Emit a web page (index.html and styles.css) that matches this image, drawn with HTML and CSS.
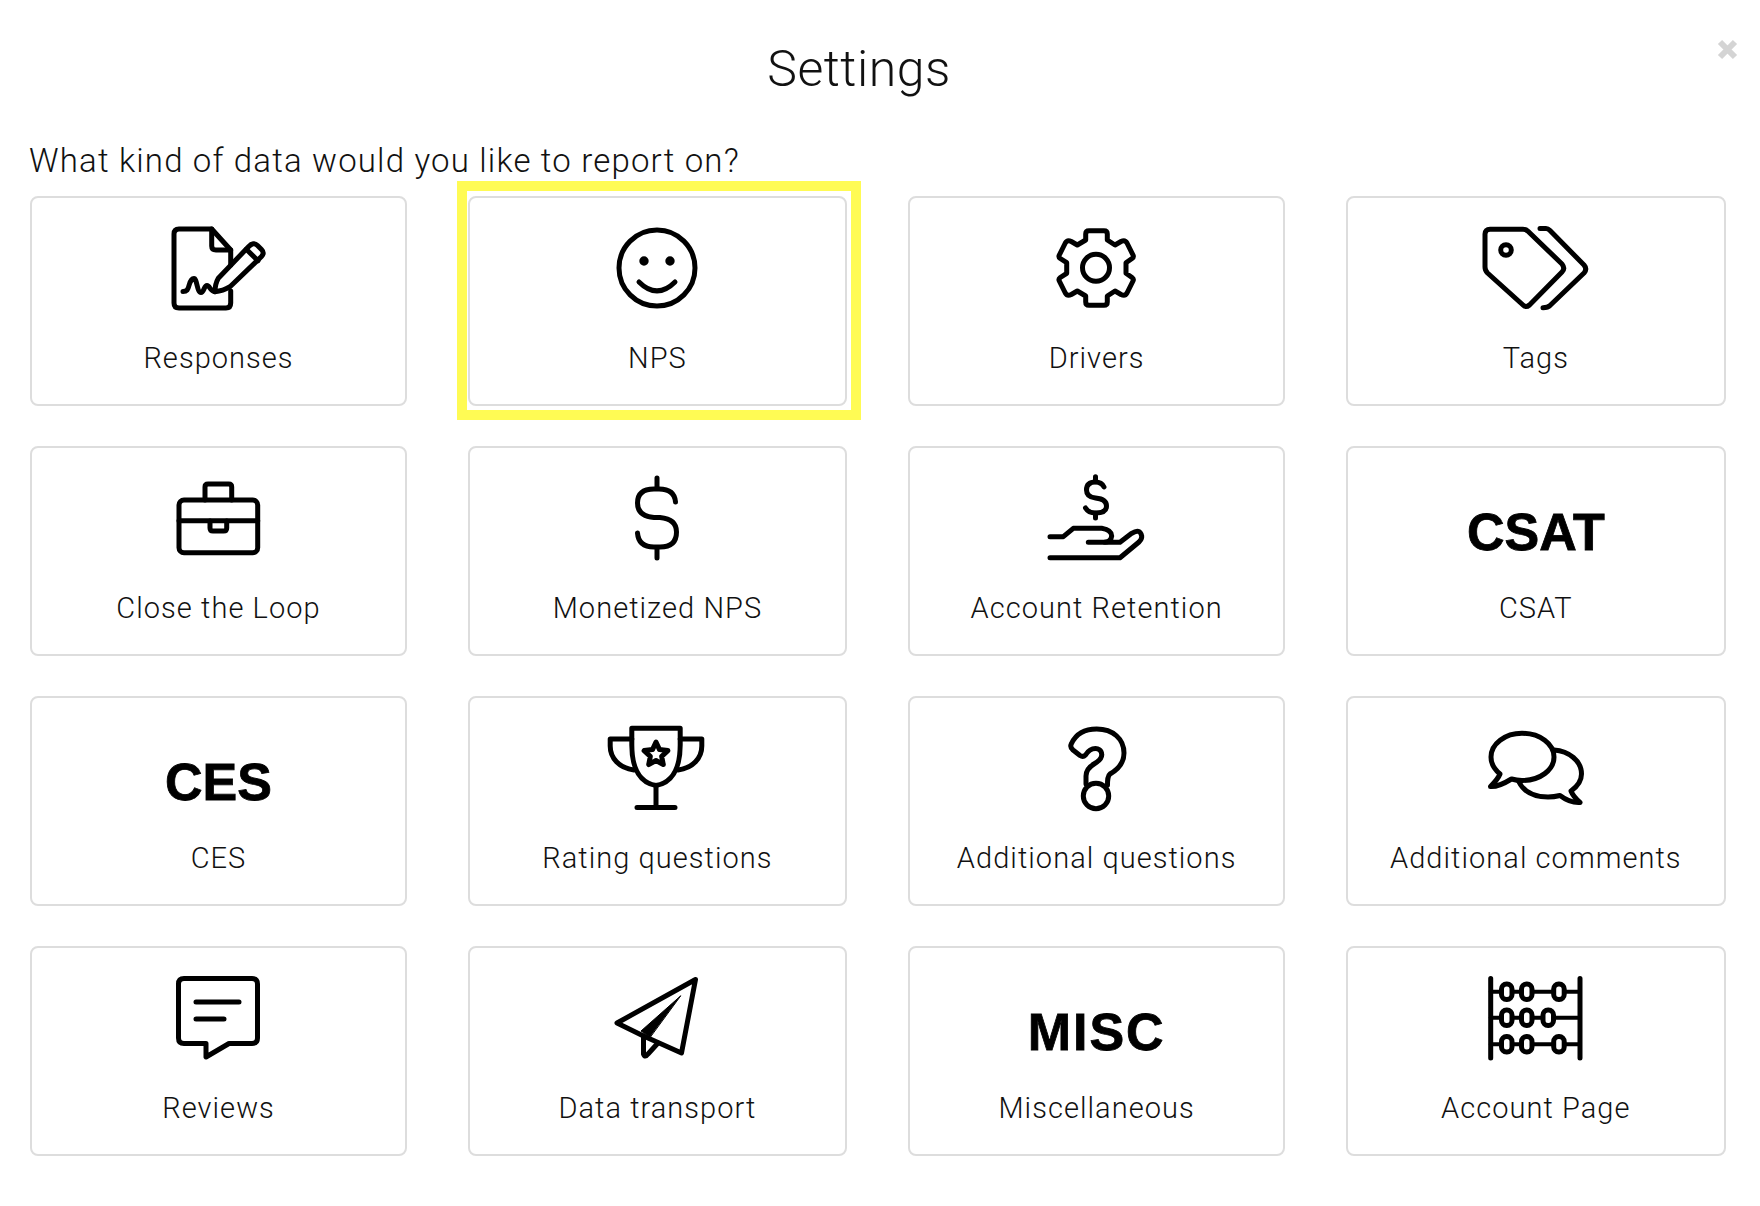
FILE: index.html
```html
<!DOCTYPE html>
<html lang="en">
<head>
    <meta charset="UTF-8">
    <meta name="viewport" content="width=device-width, initial-scale=1.0">
    <title>Settings</title>
    <link rel="stylesheet" href="styles.css">
</head>
<body>

    <div id="settings">
        <svg class="close" viewBox="0 0 21 21"><path d="M3 3 18 18M18 3 3 18"/></svg>
        <h1 class="title">Settings</h1>
        <p class="prompt">What kind of data would you like to report on?</p>

        <div class="grid">
            <div class="card">
                <svg class="icon" viewBox="0 0 96 96">
                    <path d="M59.7 45V30L40.7 9H8Q3 9 3 14V83Q3 88 8 88H55Q59.7 88 59.7 83V71"/>
                    <path d="M40.7 9V26Q40.7 30 45 30H59.7"/>
                    <path d="M44 71.7Q44 64 47.3 58.3L77.5 26.7Q82.5 21.5 86.5 25.5L90.5 29.5Q94 33 90.5 36.5L59 66.7Q52 71 44 71.7Z"/>
                    <path d="M75.3 29.3 87 40.7"/>
                    <path d="M12 71.5C16 71.5 17 69.5 18 65.5 19 61.5 21 58.5 23 58.5 26 58.5 26 72.5 30 72.5 33 72.5 33 65.5 36 65.5 39 65.5 39 71.5 44 71.7"/>
                </svg>
                <div class="label">Responses</div>
            </div>
            <div class="card">
                <svg class="icon" viewBox="0 0 96 96">
                    <circle cx="48" cy="48" r="38"/>
                    <circle class="solid" cx="35" cy="41" r="2.2"/>
                    <circle class="solid" cx="61" cy="41" r="2.2"/>
                    <path d="M30 62Q48 80 66 62"/>
                </svg>
                <div class="label">NPS</div>
                <div class="highlight"></div>
            </div>
            <div class="card">
                <svg class="icon" viewBox="0 0 96 96">
                    <path d="M36.7 20V14Q36.7 10.7 40 10.7H55Q58.3 10.7 58.3 14V20L66 25 72 21.5Q76 19.5 78 23L84 35Q85 37 83 38.5L77 42.7V53.3L83 57.5Q85 59 84 61L78 73Q76 76.5 72 74.5L66 71 58.3 76V82Q58.3 85.3 55 85.3H40Q36.7 85.3 36.7 82V76L28.3 71 22.3 74.5Q18.3 76.5 16.3 73L10.3 61Q9.3 59 11.3 57.5L17.7 53.3V42.7L11.3 38.5Q9.3 37 10.3 35L16.3 23Q18.3 19.5 22.3 21.5L28.3 25Z"/>
                    <circle cx="47" cy="47.7" r="13.5"/>
                </svg>
                <div class="label">Drivers</div>
            </div>
            <div class="card">
                <svg class="icon" viewBox="0 0 96 96">
                    <path d="M2 9.3H35Q38 9.3 40 11.3L74 44Q77.5 48.5 74 52L41.5 85Q38 88 35 85L-.5 53Q-3 50.5-3 47V14Q-3 9.3 2 9.3Z"/>
                    <circle cx="18" cy="30" r="5.3"/>
                    <path d="M52 8.5H58Q60 8.5 62 10.5L96 45Q99.5 49 96 53L62 85.5Q60 87.7 55 87.7"/>
                </svg>
                <div class="label">Tags</div>
            </div>

            <div class="card">
                <svg class="icon" viewBox="0 0 96 96">
                    <rect x="8" y="30" width="78.7" height="52.7" rx="5"/>
                    <path d="M8 50.7H86.7"/>
                    <path d="M34 30V17Q34 14 37 14H57.7Q60.7 14 60.7 17V30"/>
                    <path d="M39 51V58Q39 61 42 61H52.7Q55.7 61 55.7 58V51"/>
                </svg>
                <div class="label">Close the Loop</div>
            </div>
            <div class="card">
                <svg class="icon" viewBox="0 0 96 96">
                    <path d="M48 8V18M48 78V88"/>
                    <path d="M66.5 32Q65.5 19 50 19H45Q28.5 19 28.5 33 28.5 46 45 47.5H51Q67.5 49 67.5 62 67.5 77 51 77H45Q29.5 77 28.5 63"/>
                </svg>
                <div class="label">Monetized NPS</div>
            </div>
            <div class="card">
                <svg class="icon" viewBox="0 0 96 96">
                    <path d="M46.5 6.7V11.7M46.5 43.3V48"/>
                    <path d="M55 17Q52.5 12 46.5 12 37.5 12 37.5 20 37.5 27 46.5 28 57.5 29 57.5 36 57.5 43 46.5 43 39.5 43 36.5 38"/>
                    <path d="M1 66.7H14.3L24.3 58.3H52.7Q62.7 60 62.7 66 62 72.3 55 72.3H39.3"/>
                    <path d="M56 72.3H71L82.7 63.3Q91 58 92.7 66 93 69 90 72L71 87.7H1"/>
                </svg>
                <div class="label">Account Retention</div>
            </div>
            <div class="card">
                <div class="word">CSAT</div>
                <div class="label">CSAT</div>
            </div>

            <div class="card">
                <div class="word">CES</div>
                <div class="label">CES</div>
            </div>
            <div class="card">
                <svg class="icon" viewBox="0 0 96 96">
                    <path d="M22.8 8.3H71.2V25C71.2 50 62 63 47 65.5 32 63 22.8 50 22.8 25Z"/>
                    <path d="M22.8 19H1.2V26C1.2 38 10 48 25 50"/>
                    <path d="M71.2 19H92.8V26C92.8 38 84 48 69 50"/>
                    <path d="M47 66V87.5M28 87.5H66"/>
                    <path d="M47 22 50.5 29.6 58.9 30.6 52.7 36.4 54.3 44.6 47 40.5 39.7 44.6 41.3 36.4 35.1 30.6 43.5 29.6Z"/>
                </svg>
                <div class="label">Rating questions</div>
            </div>
            <div class="card">
                <svg class="icon" viewBox="0 0 96 96">
                    <circle cx="47" cy="76" r="12.7"/>
                    <path d="M37 64V56C37 50 40 47 45 44 50 41 53 38 52.7 34.5 52.5 30 49 28.5 46.5 28.5 42 28.5 39 31 36.5 35Q34 37.5 31 35.5L24 30Q20.5 27 22.5 23.5C27 14 36 9 47.7 9 64 9 75 19 75 33 75 43 68 50 61 54 58.5 56 58.5 60 58.5 65"/>
                </svg>
                <div class="label">Additional questions</div>
            </div>
            <div class="card">
                <svg class="icon" viewBox="0 0 96 96">
                    <path d="M12 54C6 49 3 43 3 37 3 24 17 13.3 34 13.3 52 13.3 66 24 66 37 66 50 52 60.5 34 60.5 30 60.5 27 60 23.5 59 17 63 9 67 2.5 66.5 6 63 10 59 12 54Z"/>
                    <path d="M66 30C81 31 93.5 41 93.5 54 93.5 60 90 66 83 71 85 76 88 79 92 82.5 85 83 78 80 72 75.5 68 76.5 64 77 60 77 46 77 36 72 31 62"/>
                </svg>
                <div class="label">Additional comments</div>
            </div>

            <div class="card">
                <svg class="icon" viewBox="0 0 96 96">
                    <path d="M13 8.5H81Q86.5 8.5 86.5 14V68Q86.5 73.5 81 73.5H58L35 87V73.5H13Q7.5 73.5 7.5 68V14Q7.5 8.5 13 8.5Z"/>
                    <path d="M25 32H68M25 49H53"/>
                </svg>
                <div class="label">Reviews</div>
            </div>
            <div class="card">
                <svg class="icon" viewBox="0 0 96 96">
                    <path d="M86.5 9.5 8 53 34.5 66 72.5 83Z"/>
                    <path class="wedge" d="M71.5 26 32 61 41 67Z"/>
                    <path d="M34.5 66V84Q36 88 39 84L49 73"/>
                </svg>
                <div class="label">Data transport</div>
            </div>
            <div class="card">
                <div class="word wide">MISC</div>
                <div class="label">Miscellaneous</div>
            </div>
            <div class="card">
                <svg class="icon" viewBox="0 0 96 96">
                    <path class="post" d="M2.7 8.5V88M92 8.5V88"/>
                    <path class="rod" d="M2.7 21.7H92M2.7 47.7H92M2.7 74.3H92"/>
                    <g class="beads">
                        <rect x="13.5" y="14" width="10.5" height="15.5" rx="5"/>
                        <rect x="33.5" y="14" width="10.5" height="15.5" rx="5"/>
                        <rect x="65.7" y="14" width="10.5" height="15.5" rx="5"/>
                        <rect x="13.5" y="40" width="10.5" height="15.5" rx="5"/>
                        <rect x="33.5" y="40" width="10.5" height="15.5" rx="5"/>
                        <rect x="55" y="40" width="10.5" height="15.5" rx="5"/>
                        <rect x="13.5" y="66.5" width="10.5" height="15.5" rx="5"/>
                        <rect x="33.5" y="66.5" width="10.5" height="15.5" rx="5"/>
                        <rect x="65.7" y="66.5" width="10.5" height="15.5" rx="5"/>
                    </g>
                </svg>
                <div class="label">Account Page</div>
            </div>
        </div>
    </div>

</body>
</html>
```

FILE: styles.css
```css
body {
    margin: 0;
    background: #fff;
    color: #111;
    font-family: Roboto, "Liberation Sans", sans-serif;
    font-weight: 300;
}

#settings {
    position: relative;
    height: 1206px;
    padding: 39px 0 0 30px;
    box-sizing: border-box;
}

.close {
    position: absolute;
    top: 39px;
    right: 22px;
    width: 21px;
    height: 21px;
    fill: none;
    stroke: #d4d4d4;
    stroke-width: 6;
}

.title {
    margin: 0 0 0 -30px;
    padding-right: 42px;
    font-size: 50px;
    font-weight: 300;
    line-height: 60px;
    letter-spacing: 0.5px;
    text-align: center;
}

.prompt {
    margin: 43px 0 16px -1px;
    font-size: 33px;
    line-height: 38px;
    letter-spacing: 1.17px;
}

.grid {
    display: grid;
    grid-template-columns: 377px 379.5px 377.5px 379.5px;
    grid-auto-rows: 210px;
    column-gap: 60.7px;
    row-gap: 40px;
}

.card {
    position: relative;
    display: flex;
    flex-direction: column;
    align-items: center;
    padding-top: 22px;
    border: 2px solid #ddd;
    border-radius: 8px;
    box-sizing: border-box;
}

.icon {
    width: 96px;
    height: 96px;
    overflow: visible;
    fill: none;
    stroke: #000;
    stroke-width: 5;
    stroke-linecap: round;
    stroke-linejoin: round;
}

.icon .solid {
    fill: #000;
}

.icon .wedge {
    fill: #000;
    stroke-width: 1;
}

.icon .post {
    stroke-width: 5;
}

.icon .rod {
    stroke-width: 4;
}

.icon .beads rect {
    fill: #fff;
}

.word {
    height: 96px;
    padding-top: 14px;
    box-sizing: border-box;
    color: #000;
    font-family: "Liberation Sans", sans-serif;
    font-size: 52px;
    font-weight: 700;
    line-height: 96px;
    -webkit-text-stroke: 0.8px #000;
}

.word.wide {
    letter-spacing: 2px;
}

.label {
    margin-top: 24px;
    font-size: 29px;
    line-height: 36px;
    letter-spacing: 1.05px;
    text-align: center;
}

.highlight {
    position: absolute;
    top: -17px;
    left: -12.5px;
    right: -15.5px;
    bottom: -16px;
    border: 10px solid #fffb54;
    pointer-events: none;
}
```
